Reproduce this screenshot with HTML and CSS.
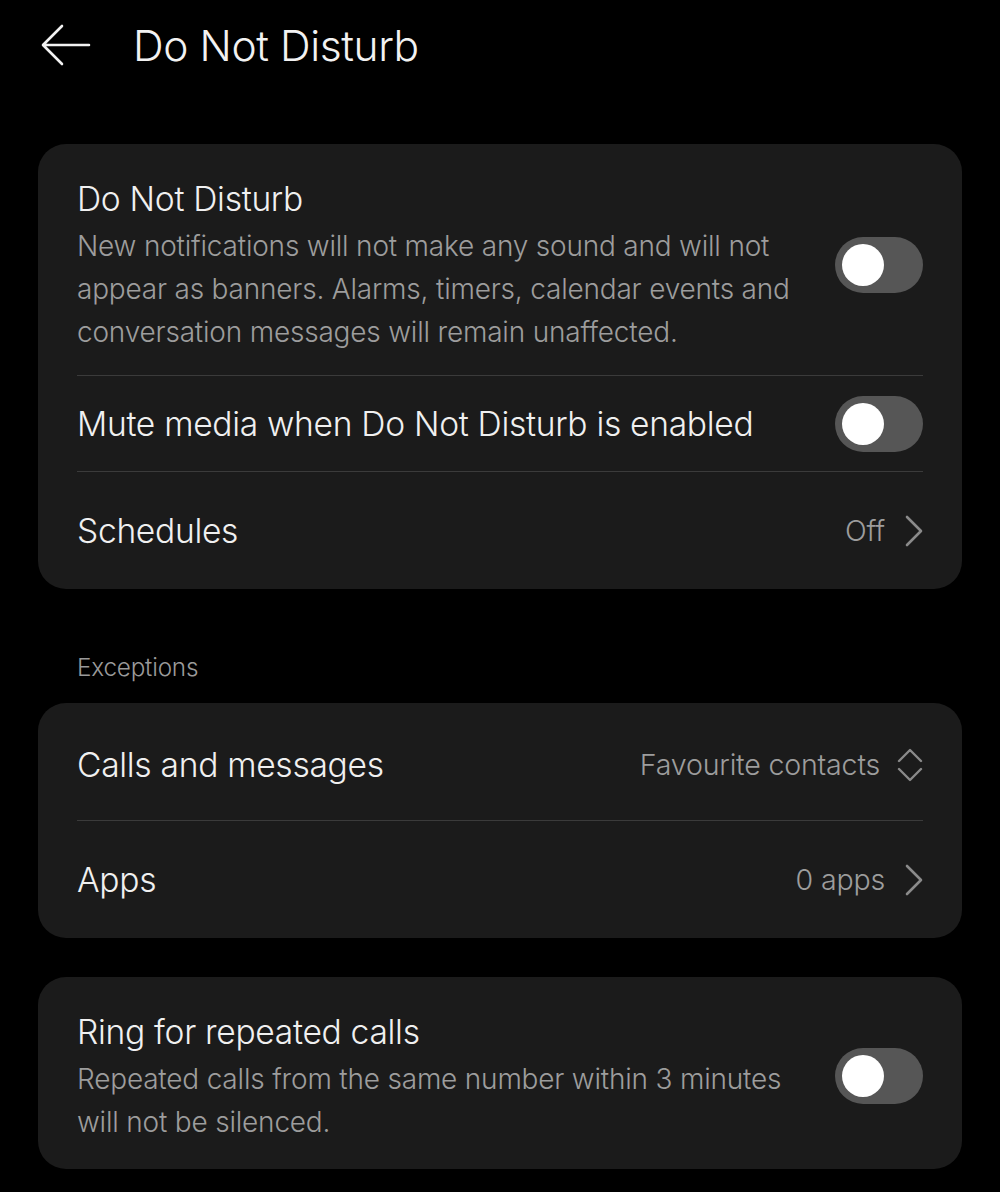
FILE: index.html
```html
<!DOCTYPE html>
<html lang="en">
<head>
    <meta charset="UTF-8">
    <meta name="viewport" content="width=device-width, initial-scale=1.0">
    <title>Do Not Disturb</title>
    <link rel="stylesheet" href="styles.css">
</head>
<body>
    <header class="topbar">
        <svg class="back" width="50" height="42" viewBox="0 0 50 42">
            <path d="M48 21 H3 M21 2 L2 21 L21 40" fill="none" stroke="#f2f2f2" stroke-width="2.6" stroke-linecap="round" stroke-linejoin="round"/>
        </svg>
        <h1 class="page-title">Do Not Disturb</h1>
    </header>

    <section class="card">
        <div class="row row-desc">
            <div class="text">
                <div class="title">Do Not Disturb</div>
                <div class="desc">New notifications will not make any sound and will not appear as banners. Alarms, timers, calendar events and conversation messages will remain unaffected.</div>
            </div>
            <div class="switch"><span class="knob"></span></div>
        </div>
        <div class="row row-mid">
            <div class="title">Mute media when Do Not Disturb is enabled</div>
            <div class="switch"><span class="knob"></span></div>
        </div>
        <div class="row row-end">
            <div class="title">Schedules</div>
            <div class="value">
                Off
                <svg class="chev" width="18" height="32" viewBox="0 0 18 32"><path d="M2 2 L16 16 L2 30" fill="none" stroke="#8a8a8a" stroke-width="2.6" stroke-linecap="round" stroke-linejoin="round"/></svg>
            </div>
        </div>
    </section>

    <div class="section-label">Exceptions</div>

    <section class="card">
        <div class="row row-end row-top">
            <div class="title">Calls and messages</div>
            <div class="value">
                Favourite contacts
                <svg class="updown" width="26" height="36" viewBox="0 0 26 36"><path d="M2 14 L13 3 L24 14 M2 22 L13 33 L24 22" fill="none" stroke="#8a8a8a" stroke-width="2.4" stroke-linecap="round" stroke-linejoin="round"/></svg>
            </div>
        </div>
        <div class="row row-end">
            <div class="title">Apps</div>
            <div class="value">
                0 apps
                <svg class="chev" width="18" height="32" viewBox="0 0 18 32"><path d="M2 2 L16 16 L2 30" fill="none" stroke="#8a8a8a" stroke-width="2.6" stroke-linecap="round" stroke-linejoin="round"/></svg>
            </div>
        </div>
    </section>

    <section class="card card-last">
        <div class="row row-desc row-single">
            <div class="text">
                <div class="title">Ring for repeated calls</div>
                <div class="desc">Repeated calls from the same number within 3 minutes will not be silenced.</div>
            </div>
            <div class="switch"><span class="knob"></span></div>
        </div>
    </section>
</body>
</html>
```

FILE: styles.css
```css
html {
    background: #000;
}

body {
    margin: 0;
    background: #000;
    font-family: 'Inter', 'Roboto', sans-serif;
    color: #f0f0f0;
    width: 1000px;
    height: 1192px;
    overflow: hidden;
}

.topbar {
    display: flex;
    align-items: center;
    height: 90px;
    padding-left: 41px;
}

.back {
    display: block;
}

.page-title {
    margin: 0 0 0 42px;
    font-size: 42.5px;
    font-weight: 350;
    color: #f2f2f2;
    letter-spacing: -0.4px;
}

.card {
    background: #1b1b1b;
    border-radius: 28px;
    margin: 54px 38px 0 38px;
    padding: 0 39px;
}

.row {
    display: flex;
    align-items: center;
    justify-content: space-between;
    border-bottom: 1px solid #3b3b3b;
}

.row:last-child {
    border-bottom: none;
}

.row-desc {
    padding: 31px 0 21px 0;
}

.row-mid {
    height: 95px;
}

.row-end {
    height: 117px;
}

.row-top {
    height: 118px;
    padding-top: 6px;
    box-sizing: border-box;
}

.text {
    flex: 1;
    max-width: 730px;
}

.title {
    font-size: 33.6px;
    font-weight: 350;
    line-height: 48px;
    color: #f0f0f0;
    letter-spacing: -0.3px;
}

.desc {
    margin-top: 2px;
    font-size: 28px;
    font-weight: 350;
    line-height: 43px;
    color: #9d9d9d;
    letter-spacing: -0.2px;
}

.switch {
    width: 88px;
    height: 56px;
    border-radius: 28px;
    background: #565656;
    display: flex;
    align-items: center;
    padding-left: 7px;
    box-sizing: border-box;
    flex-shrink: 0;
}

.knob {
    width: 42px;
    height: 42px;
    border-radius: 50%;
    background: #fff;
}

.value {
    display: flex;
    align-items: center;
    font-size: 28.6px;
    font-weight: 350;
    color: #9d9d9d;
    letter-spacing: -0.2px;
}

.chev {
    margin-left: 20px;
}

.updown {
    margin-left: 17px;
}

.section-label {
    margin: 58px 0 0 77px;
    font-size: 24.3px;
    font-weight: 350;
    color: #9a9a9a;
    letter-spacing: -0.2px;
    line-height: 40px;
}

.section-label + .card {
    margin-top: 16px;
}

.card-last {
    margin-top: 39px;
}

.row-single {
    padding: 31px 0 25px 0;
}
```
